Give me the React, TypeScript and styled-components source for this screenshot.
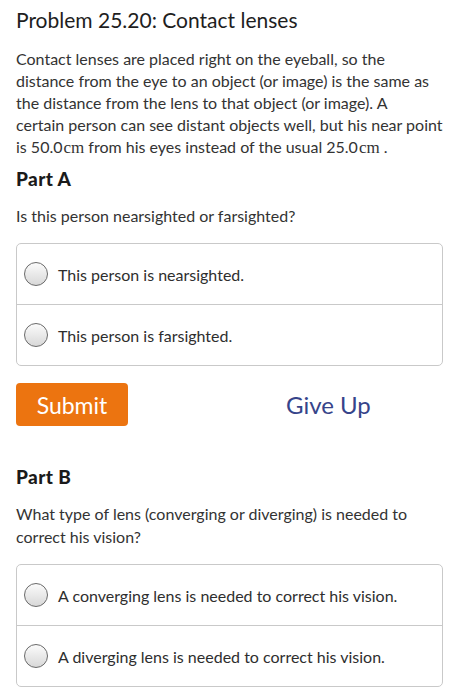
import React, { useState } from 'react';
import styled, { createGlobalStyle } from 'styled-components';

const GlobalStyle = createGlobalStyle`
  html, body {
    margin: 0;
    padding: 0;
    background: #ffffff;
  }
  body {
    font-family: Lato, "Open Sans", sans-serif;
  }
`;

type Choice = { id: string; label: string };

const partAChoices: Choice[] = [
  { id: 'near', label: 'This person is nearsighted.' },
  { id: 'far', label: 'This person is farsighted.' },
];

const partBChoices: Choice[] = [
  { id: 'conv', label: 'A converging lens is needed to correct his vision.' },
  { id: 'div', label: 'A diverging lens is needed to correct his vision.' },
];

const ChoiceList: React.FC<{
  name: string;
  choices: Choice[];
  value: string;
  onChange: (v: string) => void;
}> = ({ name, choices, value, onChange }) => (
  <ChoiceBox>
    {choices.map((c) => (
      <ChoiceRow key={c.id} onClick={() => onChange(c.id)}>
        <Radio $checked={value === c.id} aria-label={name} />
        <ChoiceText>{c.label}</ChoiceText>
      </ChoiceRow>
    ))}
  </ChoiceBox>
);

const App: React.FC = () => {
  const [answerA, setAnswerA] = useState('');
  const [answerB, setAnswerB] = useState('');

  return (
    <Page>
      <GlobalStyle />
      <Title>Problem 25.20: Contact lenses</Title>
      <Intro>
        Contact lenses are placed right on the eyeball, so the
        <br />
        distance from the eye to an object (or image) is the same as
        <br />
        the distance from the lens to that object (or image). A
        <br />
        certain person can see distant objects well, but his near point
        <br />
        is 50.0<Unit>cm</Unit> from his eyes instead of the usual 25.0<Unit>cm</Unit> .
      </Intro>

      <PartTitle>Part A</PartTitle>
      <Question>Is this person nearsighted or farsighted?</Question>
      <ChoiceList name="partA" choices={partAChoices} value={answerA} onChange={setAnswerA} />

      <ActionRow>
        <SubmitButton>Submit</SubmitButton>
        <GiveUpLink>Give Up</GiveUpLink>
      </ActionRow>

      <PartTitle $spaced>Part B</PartTitle>
      <Question>What type of lens (converging or diverging) is needed to correct his vision?</Question>
      <ChoiceList name="partB" choices={partBChoices} value={answerB} onChange={setAnswerB} />
    </Page>
  );
};

export default App;

const Page = styled.div`
  padding: 6px 15px 20px 16px;
  color: #333;
`;

const Title = styled.h1`
  margin: 0;
  font-size: 21px;
  font-weight: 400;
  color: #1e1e1e;
  line-height: 28px;
`;

const Intro = styled.p`
  margin: 14px 0 0;
  font-size: 16px;
  line-height: 22px;
  color: #333;
`;

const Unit = styled.span`
  font-family: "Liberation Serif", "DejaVu Serif", serif;
  font-size: 17px;
  margin-left: 1px;
`;

const PartTitle = styled.h2<{ $spaced?: boolean }>`
  margin: ${(p) => (p.$spaced ? '40px' : '9px')} 0 0;
  font-size: 19px;
  font-weight: 900;
  letter-spacing: 0.4px;
  color: #1a1a1a;
  line-height: 22px;
`;

const Question = styled.p`
  margin: 14px 0 0;
  font-size: 16px;
  line-height: 23px;
  color: #333;
`;

const ChoiceBox = styled.div`
  margin-top: 16px;
  border: 1px solid #c9c9c9;
  border-radius: 5px;
  background: #fff;
`;

const ChoiceRow = styled.div`
  display: flex;
  align-items: center;
  gap: 10px;
  height: 60px;
  padding: 0 7px;
  cursor: pointer;

  & + & {
    border-top: 1px solid #c9c9c9;
  }
`;

const Radio = styled.span<{ $checked: boolean }>`
  flex: none;
  width: 22px;
  height: 22px;
  border-radius: 50%;
  border: 1px solid #6a6a6a;
  background: linear-gradient(#fbfbfb, #d8d8d8);
  box-shadow: inset 0 0 0 ${(p) => (p.$checked ? '6px #fff' : '0 transparent')};
`;

const ChoiceText = styled.span`
  font-size: 16px;
  color: #2e2e2e;
`;

const ActionRow = styled.div`
  display: flex;
  align-items: center;
  margin-top: 17px;
`;

const SubmitButton = styled.button`
  width: 112px;
  height: 43px;
  border: none;
  border-radius: 4px;
  background: #ec7410;
  color: #fff;
  font-family: Lato, "Open Sans", sans-serif;
  font-size: 23px;
  cursor: pointer;
`;

const GiveUpLink = styled.a`
  margin-left: 158px;
  font-size: 24px;
  color: #36448a;
  cursor: pointer;
`;
